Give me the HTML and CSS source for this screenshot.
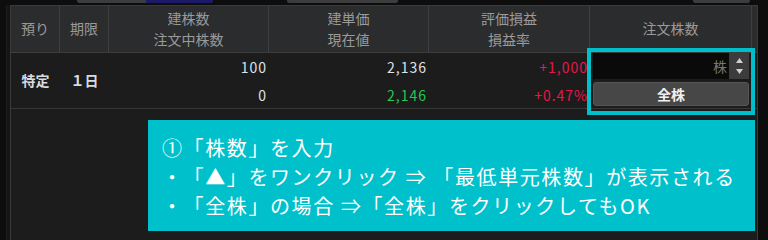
FILE: index.html
```html
<!DOCTYPE html>
<html lang="ja">
<head>
<meta charset="utf-8">
<link rel="stylesheet" href="styles.css">
</head>
<body>
<div class="topbar">
  <span class="tab tab-a"></span><span class="tab tab-b"></span><span class="tab tab-c"></span><span class="tab tab-d"></span>
</div>
<div class="frame">
  <div class="outer">
    <div class="panel">
      <div class="hrow">
        <div class="hc c1">預り</div>
        <div class="hc c2">期限</div>
        <div class="hc c3">建株数<br>注文中株数</div>
        <div class="hc c4">建単価<br>現在値</div>
        <div class="hc c5">評価損益<br>損益率</div>
        <div class="hc c6">注文株数</div>
        <div class="hc fill"></div>
      </div>
      <div class="drow">
        <div class="dc c1 label">特定</div>
        <div class="dc c2 label">１日</div>
        <div class="dc c3 num"><span>100</span><span>0</span></div>
        <div class="dc c4 num"><span>2,136</span><span class="up">2,146</span></div>
        <div class="dc c5 num"><span class="pl">+1,000</span><span class="pl">+0.47%</span></div>
        <div class="dc c6 order">
          <div class="qty">
            <div class="qty-field">株</div>
            <div class="spin">
              <svg width="7" height="5" viewBox="0 0 7 5"><path d="M3.5 0 L7 5 L0 5 Z" fill="#cfcfcf"/></svg>
              <svg width="7" height="5" viewBox="0 0 7 5"><path d="M0 0 L7 0 L3.5 5 Z" fill="#cfcfcf"/></svg>
            </div>
          </div>
          <div class="allbtn">全株</div>
        </div>
        <div class="dc fill"></div>
      </div>
      <div class="highlight"></div>
      <div class="callout">
        <p>①「株数」を入力</p>
        <p>・「▲」をワンクリック ⇒ 「最低単元株数」が表示される</p>
        <p>・「全株」の場合 ⇒「全株」をクリックしてもOK</p>
      </div>
    </div>
  </div>
</div>
</body>
</html>
```

FILE: styles.css
```css
* { box-sizing: border-box; }
html, body {
  margin: 0;
  padding: 0;
  width: 768px;
  height: 240px;
  overflow: hidden;
  background: #0d0d0d;
  font-family: "Noto Sans CJK JP", "Noto Sans", sans-serif;
  text-spacing-trim: space-all;
}
.topbar {
  height: 5px;
  display: flex;
  align-items: flex-start;
}
.tab {
  display: block;
  height: 3px;
  border-radius: 0 0 2px 2px;
  background: #3c3c3c;
}
.tab-a { margin-left: 77px; width: 69px; border-radius: 0 0 0 2px; }
.tab-b { width: 67px; background: #1c1a66; border-radius: 0 0 2px 0; }
.tab-c { margin-left: 74px; width: 111px; }
.tab-d { margin-left: 295px; width: 57px; }

.frame {
  height: 235px;
  padding-left: 6px;
}
.outer {
  width: 752px;
  height: 100%;
  border-left: 1px solid #1e1e1e;
  background: #151515;
  padding-left: 3px;
}
.panel {
  position: relative;
  width: 748px;
  height: 100%;
  border-left: 1px solid #3a3a3a;
  border-right: 1px solid #3a3a3a;
  border-top: 1px solid #3a3a3a;
  background: #1c1c1c;
}
.hrow {
  display: flex;
  height: 47px;
  background: #2b2c2e;
  border-bottom: 1px solid #3d3d3d;
}
.hc {
  display: flex;
  align-items: center;
  justify-content: center;
  text-align: center;
  border-right: 1px solid #3f3f3f;
  color: #9a9a9a;
  font-size: 14px;
  line-height: 21px;
  padding-bottom: 1px;
}
.c1 { width: 49px; }
.c2 { width: 49px; }
.c3 { width: 160px; }
.c4 { width: 160px; }
.c5 { width: 161px; }
.c6 { width: 162px; }
.fill { flex: 1; border-right: none; }

.drow {
  display: flex;
  height: 56px;
  border-bottom: 1px solid #363636;
}
.dc { color: #dfe3e8; font-size: 14px; }
.label {
  display: flex;
  align-items: center;
  justify-content: center;
  font-weight: bold;
  color: #d8dbe0;
  padding-bottom: 1px;
}
.num {
  display: flex;
  flex-direction: column;
  align-items: flex-end;
  padding-right: 2px;
  line-height: 28px;
  letter-spacing: 1px;
}
.up { color: #22c955; }
.pl { color: #e5184b; }

.order {
  padding: 0 3px 0 3px;
}
.qty {
  display: flex;
  height: 26px;
}
.qty-field {
  width: 136px;
  background: #0a0a0a;
  color: #777;
  font-size: 14px;
  line-height: 26px;
  text-align: right;
  padding-right: 2px;
}
.spin {
  width: 20px;
  background: #3c3c3c;
  display: flex;
  flex-direction: column;
  align-items: center;
  justify-content: center;
  gap: 6px;
}
.spin svg { display: block; }
.allbtn {
  margin-top: 3px;
  width: 156px;
  height: 24px;
  background: #474747;
  border: 1px solid #555;
  border-radius: 3px;
  color: #f0f0f0;
  font-weight: bold;
  font-size: 14px;
  line-height: 22px;
  text-align: center;
}

.highlight {
  position: absolute;
  left: 576px;
  top: 42px;
  width: 168px;
  height: 67px;
  border: 4px solid #00bfcb;
}
.callout {
  position: absolute;
  left: 137px;
  top: 114px;
  width: 607px;
  height: 111px;
  background: #00c1cb;
  color: #ffffff;
  padding: 13px 0 0 14px;
  font-size: 20px;
  letter-spacing: 1.6px;
  line-height: 29px;
}
.callout p { margin: 0; white-space: nowrap; }
```
